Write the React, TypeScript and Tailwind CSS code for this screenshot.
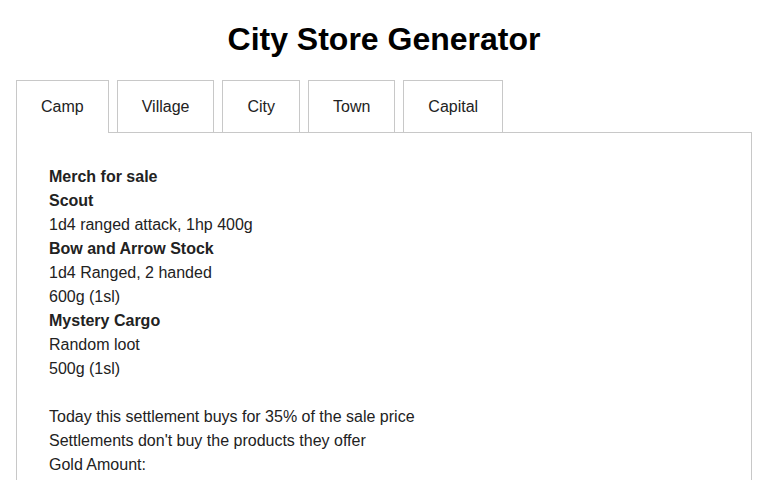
import React, { useState } from "react";

const tabs = ["Camp", "Village", "City", "Town", "Capital"];

const App = () => {
  const [active, setActive] = useState("Camp");

  return (
    <div className="min-h-screen bg-white pt-[21px] text-[#222]" style={{ fontFamily: '"Liberation Sans", Arial, sans-serif' }}>
      <h1 className="text-center text-[32px] font-bold leading-[37px] text-black">City Store Generator</h1>

      <div className="mt-[22px] px-4">
        <div className="flex items-end gap-2">
          {tabs.map((t) => (
            <button
              key={t}
              onClick={() => setActive(t)}
              className={
                t === active
                  ? "relative z-10 mb-[-1px] h-[53px] border border-b-0 border-[#c8c8c8] bg-white px-6 text-base leading-6 text-[#222]"
                  : "h-[52px] border border-b-0 border-[#c8c8c8] bg-white px-6 text-base leading-6 text-[#222]"
              }
            >
              {t}
            </button>
          ))}
        </div>

        <div className="min-h-[400px] border border-[#c8c8c8] px-8 pt-[32px] pb-8 text-base leading-6">
          <p className="font-bold">Merch for sale</p>
          <p className="font-bold">Scout</p>
          <p>1d4 ranged attack, 1hp 400g</p>
          <p className="font-bold">Bow and Arrow Stock</p>
          <p>1d4 Ranged, 2 handed</p>
          <p>600g (1sl)</p>
          <p className="font-bold">Mystery Cargo</p>
          <p>Random loot</p>
          <p>500g (1sl)</p>
          <p className="mt-6">Today this settlement buys for 35% of the sale price</p>
          <p>Settlements don't buy the products they offer</p>
          <p>Gold Amount:</p>
        </div>
      </div>
    </div>
  );
};

export default App;
